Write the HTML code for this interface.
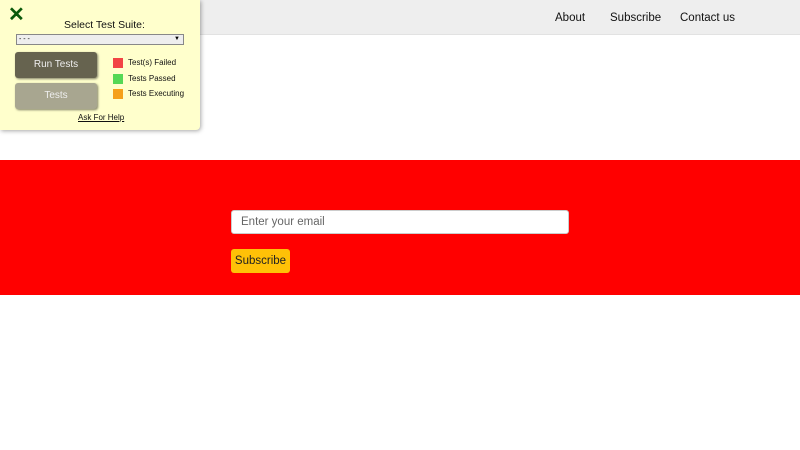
<!DOCTYPE html>
<html><head><style>
body{margin:0;width:800px;height:450px;position:relative;font-family:"Liberation Sans",sans-serif;background:#fff;overflow:hidden}
.nav{position:absolute;left:0;top:0;width:800px;height:34px;background:#eeeeee;border-bottom:1px solid #e2e2e2}
.nav a{position:absolute;top:12px;font-size:11.5px;color:#111;text-decoration:none}
.red{position:absolute;left:0;top:160px;width:800px;height:135px;background:#ff0000}
.inp{position:absolute;left:231px;top:210px;background:#fff;border:1px solid #ccc;border-radius:3px;font-size:11.5px;color:#666;line-height:22px;padding-left:9px;box-sizing:border-box;width:338px;height:24px}
.btn{position:absolute;left:231px;top:249px;width:59px;height:24px;background:#ffc107;border-radius:3px;font-size:11.5px;color:#222;line-height:24px;text-align:center}
.panel{position:absolute;left:0;top:0;width:200px;height:130px;background:#ffffcc;box-shadow:1px 1px 4px rgba(0,0,0,.35);border-radius:0 0 4px 0}
.x{position:absolute;left:8px;top:2px;font-size:20px;font-weight:bold;color:#0a5a0a}
.title{position:absolute;left:64px;top:19px;font-size:10.5px;color:#111}
.sel{position:absolute;left:16px;top:34px;width:168px;background:#eee;border:1px solid #888;font-size:7px;line-height:9px;padding-left:2px;box-sizing:border-box;height:11px}
.b{position:absolute;left:15px;width:82px;height:26px;border-radius:3px;color:#eee;font-size:10.5px;text-align:center;line-height:26px;box-shadow:1px 1px 2px rgba(0,0,0,.5)}
.lg{position:absolute;left:113px;width:10px;height:10px}
.lt{position:absolute;left:128px;font-size:8px;color:#111}
</style></head><body>
<div class="nav"><a style="left:555px">About</a><a style="left:610px">Subscribe</a><a style="left:680px">Contact us</a></div>
<div class="red"></div>
<div class="inp">Enter your email</div>
<div class="btn">Subscribe</div>
<div class="panel">
<div class="x">✕</div>
<div class="title">Select Test Suite:</div>
<div class="sel">- - -<span style="position:absolute;right:3px;font-weight:bold;font-size:6px">▼</span></div>
<div class="b" style="top:52px;background:#66634f;font-size:10px">Run Tests</div>
<div class="b" style="top:83px;background:#a8a690;font-size:10px">Tests</div>
<div class="lg" style="top:58px;background:#f24444"></div><div class="lt" style="top:58px">Test(s) Failed</div>
<div class="lg" style="top:74px;background:#55d855"></div><div class="lt" style="top:74px">Tests Passed</div>
<div class="lg" style="top:89px;background:#f5a01a"></div><div class="lt" style="top:89px">Tests Executing</div>
<div style="position:absolute;left:78px;top:113px;font-size:8px;text-decoration:underline;color:#111">Ask For Help</div>
</div>
</body></html>
